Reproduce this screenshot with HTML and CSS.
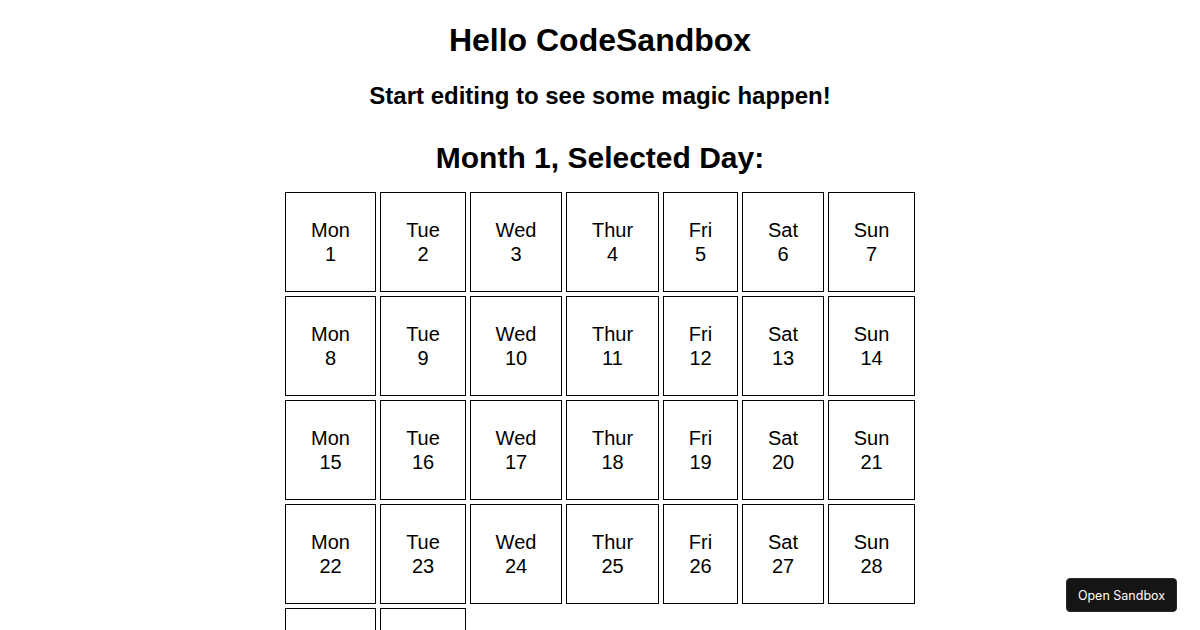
FILE: index.html
```html
<!DOCTYPE html>
<html>
<head>
<meta charset="utf-8">
<link rel="stylesheet" href="styles.css">
</head>
<body>
<div class="app">
  <h1 class="title">Hello CodeSandbox</h1>
  <h2 class="subtitle">Start editing to see some magic happen!</h2>
  <h2 class="month">Month 1, Selected Day:</h2>
  <div class="calendar">
    <div class="day">Mon<br>1</div><div class="day">Tue<br>2</div><div class="day">Wed<br>3</div><div class="day">Thur<br>4</div><div class="day">Fri<br>5</div><div class="day">Sat<br>6</div><div class="day">Sun<br>7</div>
    <div class="day">Mon<br>8</div><div class="day">Tue<br>9</div><div class="day">Wed<br>10</div><div class="day">Thur<br>11</div><div class="day">Fri<br>12</div><div class="day">Sat<br>13</div><div class="day">Sun<br>14</div>
    <div class="day">Mon<br>15</div><div class="day">Tue<br>16</div><div class="day">Wed<br>17</div><div class="day">Thur<br>18</div><div class="day">Fri<br>19</div><div class="day">Sat<br>20</div><div class="day">Sun<br>21</div>
    <div class="day">Mon<br>22</div><div class="day">Tue<br>23</div><div class="day">Wed<br>24</div><div class="day">Thur<br>25</div><div class="day">Fri<br>26</div><div class="day">Sat<br>27</div><div class="day">Sun<br>28</div>
    <div class="day">Mon<br>29</div><div class="day">Tue<br>30</div>
  </div>
</div>
<a class="open-sandbox">Open Sandbox</a>
</body>
</html>
```
FILE: styles.css
```css
html, body {
  background: #fff;
}
body {
  margin: 8px;
  font-family: "Liberation Sans", Arial, sans-serif;
  color: #000;
}
.app {
  text-align: center;
}
.title {
  font-size: 32px;
  margin: 14px 0 21px;
}
.subtitle {
  font-size: 24px;
  margin: 23px 0 0;
}
.month {
  font-size: 30px;
  margin: 31px 0 17px;
}
.calendar {
  display: grid;
  grid-template-columns: 91px 86px 92px 93px 75px 82px 87px;
  justify-content: center;
  gap: 4px;
}
.day {
  border: 1px solid #000;
  padding: 25px 0;
  font-size: 20px;
  line-height: 24px;
  text-align: center;
}
.open-sandbox {
  position: fixed;
  right: 23px;
  bottom: 18px;
  width: 111px;
  height: 34px;
  box-sizing: border-box;
  display: flex;
  align-items: center;
  justify-content: center;
  background: #151515;
  color: #fff;
  border-radius: 4px;
  font-family: Inter, "Liberation Sans", sans-serif;
  font-size: 12.5px;
  border: 1px solid #2a2a2a;
}
```
